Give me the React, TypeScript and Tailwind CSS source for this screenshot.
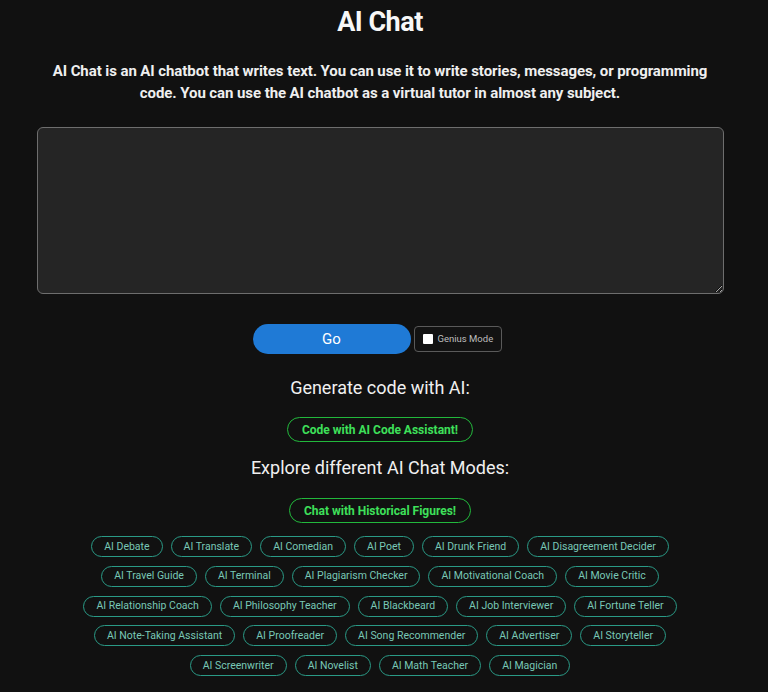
import React from "react";

const rows: string[][] = [
  ["AI Debate", "AI Translate", "AI Comedian", "AI Poet", "AI Drunk Friend", "AI Disagreement Decider"],
  ["AI Travel Guide", "AI Terminal", "AI Plagiarism Checker", "AI Motivational Coach", "AI Movie Critic"],
  ["AI Relationship Coach", "AI Philosophy Teacher", "AI Blackbeard", "AI Job Interviewer", "AI Fortune Teller"],
  ["AI Note-Taking Assistant", "AI Proofreader", "AI Song Recommender", "AI Advertiser", "AI Storyteller"],
  ["AI Screenwriter", "AI Novelist", "AI Math Teacher", "AI Magician"],
];

export default function App() {
  return (
    <div className="min-h-[692px] w-full bg-[#111111] text-[#f2f2f2]" style={{ fontFamily: "Roboto, 'Liberation Sans', sans-serif" }}>
      <div className="w-[760px] flex flex-col items-center">
        <h1 className="mt-[6px] text-[27px] leading-[32px] font-bold tracking-[-0.5px] text-[#f7f7f7]">AI Chat</h1>
        <p className="mt-[22px] text-center text-[15px] leading-[22px] font-bold tracking-[-0.08px] text-[#efefef]">
          AI Chat is an AI chatbot that writes text. You can use it to write stories, messages, or programming
          <br />
          code. You can use the AI chatbot as a virtual tutor in almost any subject.
        </p>
        <textarea className="mt-[23px] h-[167px] w-[687px] resize-y rounded-[6px] border border-[#6e6e6e] bg-[#252525] p-2 text-sm text-white outline-none" />
        <div className="mt-[30px] flex items-center gap-[3px] pr-[6px]">
          <button className="h-[30px] w-[158px] rounded-full bg-[#1f7ad6] text-[15px] text-white">Go</button>
          <label className="flex h-[26px] w-[88px] items-center gap-[5px] rounded-[4px] border border-[#5a5a5a] bg-[#121212] pl-[8px]">
            <span className="h-[10px] w-[10px] bg-white rounded-[1px]" />
            <span className="text-[9.5px] text-[#bdbdbd]">Genius Mode</span>
          </label>
        </div>
        <h2 className="mt-[22px] text-[18px] leading-[24px] text-[#f0f0f0]">Generate code with AI:</h2>
        <button className="mt-[17px] h-[25px] rounded-full border border-[#22b83c] px-[14px] text-[12px] font-bold text-[#3ee05a]">
          Code with AI Code Assistant!
        </button>
        <h2 className="mt-[14px] text-[18px] leading-[24px] text-[#f0f0f0]">Explore different AI Chat Modes:</h2>
        <button className="mt-[18px] h-[25px] rounded-full border border-[#22b83c] px-[14px] text-[12px] font-bold text-[#3ee05a]">
          Chat with Historical Figures!
        </button>
        <div className="mt-[13px] flex flex-col items-center gap-[8.75px]">
          {rows.map((row, i) => (
            <div key={i} className="flex justify-center gap-[8px]">
              {row.map((c) => (
                <span
                  key={c}
                  className="flex h-[21px] items-center rounded-full border border-[#2a9a86] px-[12px] text-[10.5px] text-[#78c8b6] whitespace-nowrap"
                >
                  {c}
                </span>
              ))}
            </div>
          ))}
        </div>
      </div>
    </div>
  );
}
